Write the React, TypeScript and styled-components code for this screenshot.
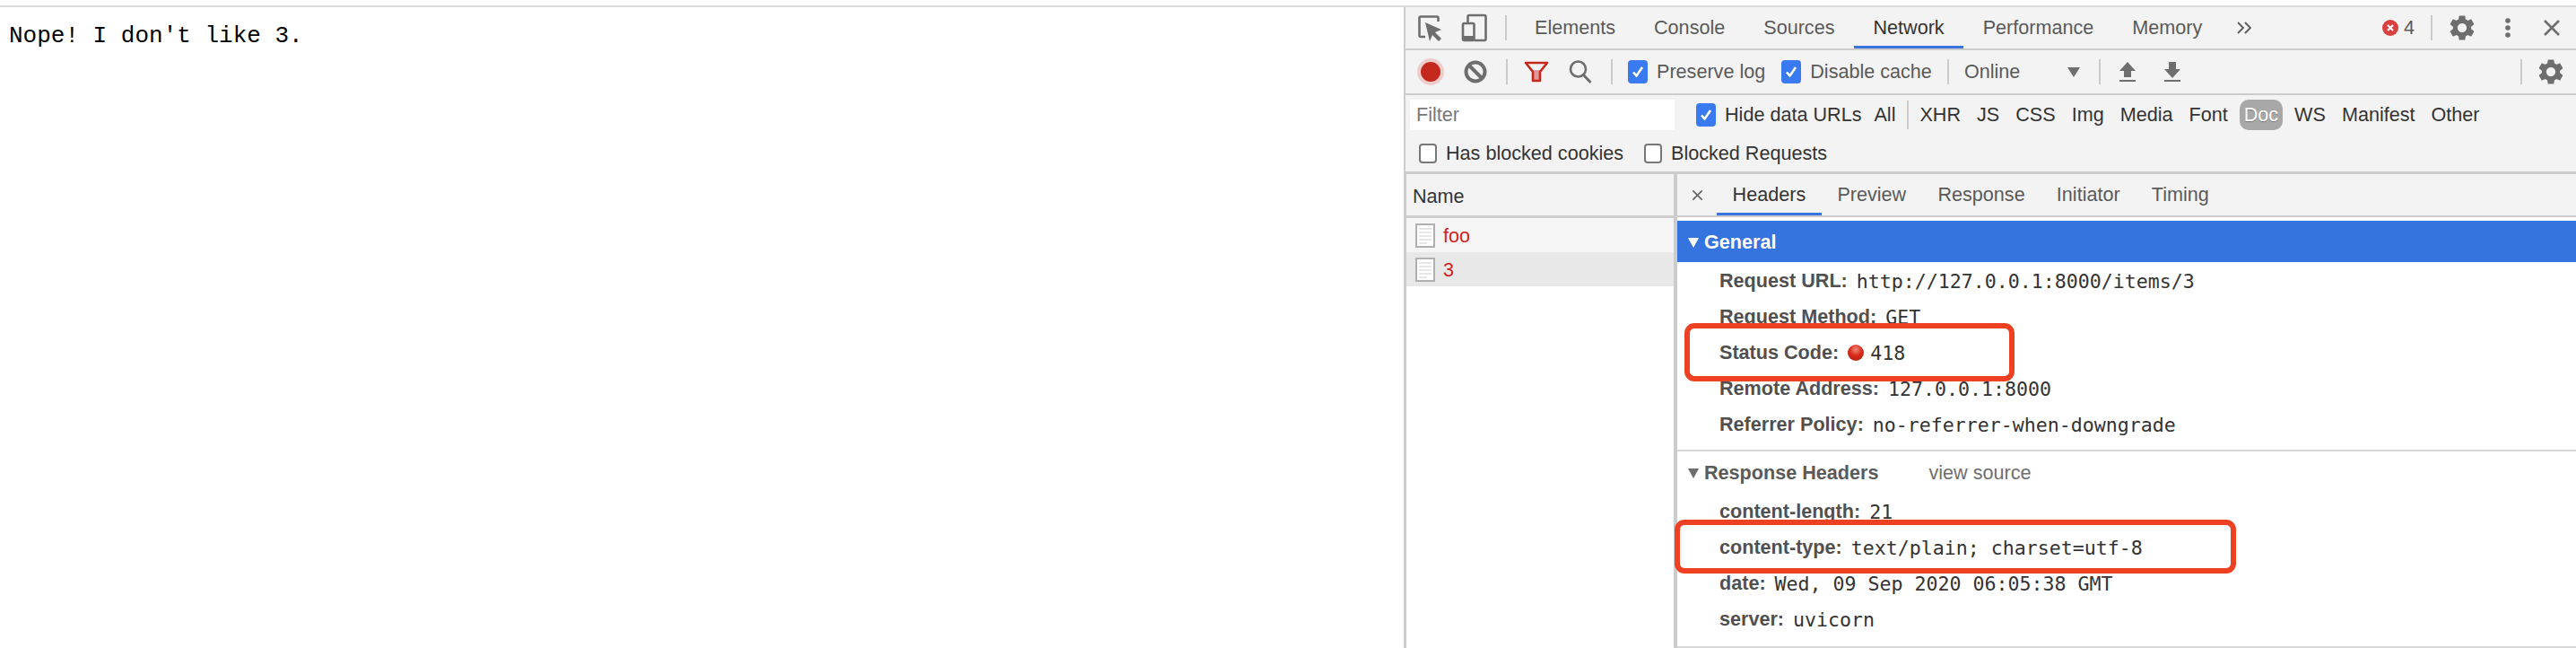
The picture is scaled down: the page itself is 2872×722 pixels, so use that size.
import React from "react";
import styled, { createGlobalStyle } from "styled-components";
import { MdSettings } from "react-icons/md";

const GlobalStyle = createGlobalStyle`
  html, body {
    margin: 0;
    padding: 0;
    background: #fff;
  }
  * {
    box-sizing: border-box;
  }
`;

const Page = styled.div`
  position: relative;
  width: 2872px;
  height: 722px;
  overflow: hidden;
  padding-top: 6px;
  font-family: "Liberation Sans", Arial, sans-serif;
  font-size: 21.6px;
  color: #333;
`;

const Frame = styled.div`
  display: flex;
  height: 716px;
  border-top: 2px solid #dcdce0;
`;

const Browser = styled.pre`
  width: 1565px;
  flex-shrink: 0;
  margin: 0;
  padding: 17px 10px;
  font-family: "Liberation Mono", "Courier New", monospace;
  font-size: 26px;
  line-height: 30px;
  color: #000;
`;

const DevTools = styled.div`
  flex: 1;
  display: flex;
  flex-direction: column;
  min-width: 0;
  border-left: 2px solid #ccc;
`;

const Toolbar = styled.div<{ $height: number }>`
  display: flex;
  align-items: center;
  height: ${(p) => p.$height}px;
  flex-shrink: 0;
  padding-left: 3px;
  background: #f3f3f3;
  border-bottom: 2px solid #ccc;
`;

const FilterArea = styled.div`
  height: 88px;
  flex-shrink: 0;
  background: #f3f3f3;
  border-bottom: 3px solid #ccc;
`;

const FilterRow = styled.div`
  display: flex;
  align-items: center;
  height: 43px;
  padding-left: 5px;
`;

const BlockedRow = styled.div`
  display: flex;
  align-items: center;
  height: 42px;
  padding-top: 2px;
  padding-left: 15px;
`;

const IconButton = styled.div<{ $w?: number; $ml?: number; $color?: string }>`
  display: flex;
  align-items: center;
  justify-content: center;
  flex-shrink: 0;
  width: ${(p) => p.$w ?? 50}px;
  margin-left: ${(p) => p.$ml ?? 0}px;
  color: ${(p) => p.$color ?? "#6e6e6e"};
`;

const Separator = styled.div<{ $ml?: number; $mr?: number; $h?: number }>`
  width: 2px;
  height: ${(p) => p.$h ?? 28}px;
  flex-shrink: 0;
  margin-left: ${(p) => p.$ml ?? 0}px;
  margin-right: ${(p) => p.$mr ?? 0}px;
  background: #ccc;
`;

const Tab = styled.div<{ $active?: boolean }>`
  display: flex;
  align-items: center;
  height: 100%;
  padding: 0 21.5px;
  color: ${(p) => (p.$active ? "#333" : "#5a5a5a")};
  box-shadow: ${(p) => (p.$active ? "inset 0 -3px 0 #3a74df" : "none")};
`;

const TabStrip = styled.div`
  display: flex;
  align-items: center;
  height: 100%;
  margin-left: 9.5px;
`;

const RightGroup = styled.div<{ $pr?: number }>`
  display: flex;
  align-items: center;
  margin-left: auto;
  padding-right: ${(p) => p.$pr ?? 0}px;
`;

const ErrorCount = styled.span`
  margin-left: 6px;
  margin-right: 18px;
  color: #5a5a5a;
`;

const Check = styled.span<{ $checked?: boolean; $ml?: number }>`
  display: inline-flex;
  align-items: center;
  justify-content: center;
  width: ${(p) => (p.$checked ? 22 : 20)}px;
  height: ${(p) => (p.$checked ? 26 : 22)}px;
  flex-shrink: 0;
  margin-left: ${(p) => p.$ml ?? 0}px;
  border-radius: 4px;
  background: ${(p) => (p.$checked ? "#3a7af0" : "#fff")};
  border: ${(p) => (p.$checked ? "none" : "2px solid #777")};
`;

const CheckLabel = styled.span<{ $color?: string }>`
  margin-left: 10px;
  white-space: nowrap;
  color: ${(p) => p.$color ?? "#333"};
`;

const PlainText = styled.span<{ $ml?: number; $color?: string }>`
  margin-left: ${(p) => p.$ml ?? 0}px;
  color: ${(p) => p.$color ?? "#5a5a5a"};
`;

const FilterInput = styled.div`
  display: flex;
  align-items: center;
  width: 295px;
  height: 34px;
  padding-left: 7px;
  background: #fff;
  color: #777;
`;

const TypeItem = styled.span<{ $selected?: boolean }>`
  display: flex;
  align-items: center;
  height: 34px;
  margin: 0 4px;
  padding: 0 5px;
  border-radius: 10px;
  color: ${(p) => (p.$selected ? "#fff" : "#333")};
  background: ${(p) => (p.$selected ? "#a8a8a8" : "transparent")};
  text-shadow: ${(p) => (p.$selected ? "0 1px 1px rgba(0,0,0,.25)" : "none")};
`;

const Split = styled.div`
  flex: 1;
  display: flex;
  min-height: 0;
`;

const NameColumn = styled.div`
  width: 303px;
  flex-shrink: 0;
  border-right: 4px solid #ccc;
  border-left: 1px solid #ccc;
  background: #fff;
`;

const NameHeader = styled.div`
  display: flex;
  align-items: center;
  height: 49px;
  padding-top: 4px;
  padding-left: 7px;
  background: #f3f3f3;
  border-bottom: 3px solid #ccc;
  color: #333;
`;

const NameRow = styled.div<{ $selected?: boolean }>`
  display: flex;
  align-items: center;
  height: 38px;
  padding-left: 10px;
  gap: 9px;
  color: #d0241a;
  background: ${(p) => (p.$selected ? "#e8e8e8" : "#f5f5f5")};
`;

const NameLabel = styled.span`
  padding-top: 2px;
`;

const DetailPane = styled.div`
  flex: 1;
  min-width: 0;
  background: #fff;
`;

const DetailTabs = styled.div`
  display: flex;
  align-items: center;
  height: 48px;
  background: #f3f3f3;
  border-bottom: 2px solid #ccc;
`;

const CloseCross = styled.div`
  display: flex;
  justify-content: center;
  width: 44px;
  color: #666;
`;

const DetailTab = styled.div<{ $active?: boolean }>`
  display: flex;
  align-items: center;
  height: 100%;
  padding: 0 17.6px;
  color: ${(p) => (p.$active ? "#333" : "#5a5a5a")};
  box-shadow: ${(p) => (p.$active ? "inset 0 -3px 0 #3a74df" : "none")};
`;

const SectionBar = styled.div`
  display: flex;
  align-items: center;
  height: 46px;
  margin-top: 4px;
  padding-top: 2px;
  padding-left: 12px;
  gap: 6px;
  background: #3573df;
  color: #fff;
  font-weight: 700;
`;

const Triangle = styled.span<{ $color: string }>`
  width: 0;
  height: 0;
  border-left: 6px solid transparent;
  border-right: 6px solid transparent;
  border-top: 11px solid ${(p) => p.$color};
`;

const Section = styled.div<{ $pb?: number }>`
  padding: 1px 0 ${(p) => p.$pb ?? 8}px;
  border-bottom: 2px solid #d8d8d8;
`;

const SectionTitle = styled.div`
  display: flex;
  align-items: center;
  height: 46px;
  padding-left: 12px;
  gap: 6px;
  font-weight: 700;
  color: #5a5a5a;
`;

const ViewSource = styled.span`
  margin-left: 50px;
  font-weight: 400;
  color: #6e6e6e;
`;

const HeaderRow = styled.div`
  display: flex;
  align-items: center;
  height: 40px;
  padding-left: 47px;
  white-space: nowrap;
`;

const HeaderName = styled.span`
  font-weight: 700;
  color: #505050;
  margin-right: 10px;
`;

const HeaderValue = styled.span`
  font-family: "DejaVu Sans Mono", Menlo, monospace;
  font-size: 21.6px;
  color: #333;
`;

const StatusDot = styled.span`
  width: 18px;
  height: 18px;
  margin-right: 7px;
  border-radius: 50%;
  background: radial-gradient(circle at 50% 30%, #f08a7a 0, #d92a1a 45%, #a81c10 100%);
`;

const Highlight = styled.div`
  position: absolute;
  border: 6px solid #ee4023;
  border-radius: 11px;
`;

const StatusHighlight = styled(Highlight)`
  left: 1878px;
  top: 360px;
  width: 368px;
  height: 65px;
`;

const ContentTypeHighlight = styled(Highlight)`
  left: 1867px;
  top: 579px;
  width: 626px;
  height: 60px;
`;

const InspectIcon = () => (
  <svg width="32" height="36" viewBox="0 0 32 36" fill="none">
    <path d="M10 28H5a1.5 1.5 0 0 1-1.5-1.5V7A1.5 1.5 0 0 1 5 5.5h18A1.5 1.5 0 0 1 24.5 7v4" stroke="#6e6e6e" strokeWidth="2.6" />
    <path d="M10 12l18 8-7 3 7 7-3 3-7-7-3 7z" fill="#6e6e6e" />
  </svg>
);

const DeviceIcon = () => (
  <svg width="30" height="36" viewBox="0 0 30 36" fill="none">
    <path d="M7.5 12V5.5A1.5 1.5 0 0 1 9 4h17a1.5 1.5 0 0 1 1.5 1.5v25A1.5 1.5 0 0 1 26 32H15" stroke="#6e6e6e" strokeWidth="2.6" />
    <rect x="2" y="13" width="12.5" height="19" rx="1.5" stroke="#6e6e6e" strokeWidth="2.6" />
    <rect x="2" y="27" width="12.5" height="5" fill="#6e6e6e" />
  </svg>
);

const RecordIcon = () => (
  <svg width="32" height="32" viewBox="0 0 32 32">
    <circle cx="16" cy="16" r="15" fill="#c5281c" opacity=".18" />
    <circle cx="16" cy="16" r="11" fill="#c5281c" />
  </svg>
);

const ClearIcon = () => (
  <svg width="26" height="26" viewBox="0 0 26 26" fill="none" stroke="#6e6e6e" strokeWidth="4">
    <circle cx="13" cy="13" r="10.5" />
    <path d="M5.5 5.5l15 15" />
  </svg>
);

const FunnelIcon = () => (
  <svg width="28" height="24" viewBox="0 0 28 24">
    <path d="M8 10h12l-2 3v8h-8v-8z" fill="#e0989a" />
    <path d="M2 2h24l-8 10v10h-8V12z" fill="none" stroke="#c5281c" strokeWidth="2.6" strokeLinejoin="round" />
  </svg>
);

const SearchIcon = () => (
  <svg width="26" height="28" viewBox="0 0 26 28" fill="none" stroke="#6e6e6e">
    <circle cx="10.5" cy="11" r="8.5" strokeWidth="2.6" />
    <path d="M16.5 17.5l8 8.5" strokeWidth="3" />
  </svg>
);

const ErrorIcon = () => (
  <svg width="18" height="18" viewBox="0 0 18 18">
    <circle cx="9" cy="9" r="9" fill="#d94040" />
    <path d="M6 6l6 6M12 6l-6 6" stroke="#fff" strokeWidth="2.2" />
  </svg>
);

const DotsIcon = () => (
  <svg width="8" height="24" viewBox="0 0 8 24" fill="#6e6e6e">
    <circle cx="4" cy="4" r="2.8" />
    <circle cx="4" cy="12" r="2.8" />
    <circle cx="4" cy="20" r="2.8" />
  </svg>
);

const CrossIcon = ({ size, weight }: { size: number; weight: number }) => (
  <svg width={size} height={size} viewBox="0 0 20 20" fill="none" stroke="currentColor" strokeWidth={weight}>
    <path d="M2 2l16 16M18 2L2 18" />
  </svg>
);

const ChevronsIcon = () => (
  <svg width="16" height="14" viewBox="0 0 16 14" fill="none" stroke="#5a5a5a" strokeWidth="1.8">
    <path d="M1 1l6 6-6 6M9 1l6 6-6 6" />
  </svg>
);

const TickIcon = () => (
  <svg width="14" height="14" viewBox="0 0 14 14" fill="none" stroke="#fff" strokeWidth="2.6">
    <path d="M2 7.5l3.5 4L12 2" />
  </svg>
);

const CaretIcon = () => (
  <svg width="14" height="11" viewBox="0 0 14 11" fill="#6e6e6e">
    <path d="M0 0h14L7 11z" />
  </svg>
);

const UploadIcon = () => (
  <svg width="20" height="24" viewBox="0 0 20 24" fill="#6e6e6e">
    <path d="M10 1l9 10h-5v7H6v-7H1z" />
    <rect x="1" y="21" width="18" height="2" />
  </svg>
);

const DownloadIcon = () => (
  <svg width="20" height="24" viewBox="0 0 20 24" fill="#6e6e6e">
    <path d="M6 1h8v8h5l-9 10L1 9h5z" />
    <rect x="1" y="21" width="18" height="2" />
  </svg>
);

const FileIcon = () => (
  <svg width="22" height="27" viewBox="0 0 22 27">
    <rect x="1" y="1" width="20" height="25" fill="#fff" stroke="#b0b0b0" strokeWidth="2" />
    <path d="M4 6h14M4 10h14M4 14h14M4 18h14M4 22h9" stroke="#e0e0e0" strokeWidth="1.6" />
  </svg>
);

const mainTabs = ["Elements", "Console", "Sources", "Network", "Performance", "Memory"];
const typeFilters = ["XHR", "JS", "CSS", "Img", "Media", "Font", "Doc", "WS", "Manifest", "Other"];
const detailTabs = ["Headers", "Preview", "Response", "Initiator", "Timing"];

export default function App() {
  return (
    <Page>
      <GlobalStyle />
      <Frame>
        <Browser>Nope! I don't like 3.</Browser>
        <DevTools>
          <Toolbar $height={48}>
            <IconButton $w={50}><InspectIcon /></IconButton>
            <IconButton $w={48}><DeviceIcon /></IconButton>
            <Separator $ml={10} />
            <TabStrip>
              {mainTabs.map((t) => (
                <Tab key={t} $active={t === "Network"}>{t}</Tab>
              ))}
            </TabStrip>
            <IconButton $w={16} $ml={17}><ChevronsIcon /></IconButton>
            <RightGroup $pr={3}>
              <ErrorIcon />
              <ErrorCount>4</ErrorCount>
              <Separator $mr={8} />
              <IconButton><MdSettings size={34} /></IconButton>
              <IconButton $w={51}><DotsIcon /></IconButton>
              <IconButton $w={48}><CrossIcon size={20} weight={2.6} /></IconButton>
            </RightGroup>
          </Toolbar>

          <Toolbar $height={50}>
            <IconButton><RecordIcon /></IconButton>
            <IconButton><ClearIcon /></IconButton>
            <Separator $ml={9} />
            <IconButton $ml={7}><FunnelIcon /></IconButton>
            <IconButton $ml={-1}><SearchIcon /></IconButton>
            <Separator $ml={9} />
            <Check $checked $ml={17}><TickIcon /></Check>
            <CheckLabel $color="#5a5a5a">Preserve log</CheckLabel>
            <Check $checked $ml={18}><TickIcon /></Check>
            <CheckLabel $color="#5a5a5a">Disable cache</CheckLabel>
            <Separator $ml={17} />
            <PlainText $ml={17}>Online</PlainText>
            <IconButton $w={16} $ml={52}><CaretIcon /></IconButton>
            <Separator $ml={20} />
            <IconButton $ml={5}><UploadIcon /></IconButton>
            <IconButton><DownloadIcon /></IconButton>
            <RightGroup>
              <Separator $mr={6} />
              <IconButton $w={52}><MdSettings size={34} /></IconButton>
              <IconButton $w={2} />
            </RightGroup>
          </Toolbar>

          <FilterArea>
            <FilterRow>
              <FilterInput>Filter</FilterInput>
              <Check $checked $ml={24}><TickIcon /></Check>
              <CheckLabel>Hide data URLs</CheckLabel>
              <PlainText $ml={14} $color="#333">All</PlainText>
              <Separator $ml={13} $mr={3} $h={32} />
              {typeFilters.map((t) => (
                <TypeItem key={t} $selected={t === "Doc"}>{t}</TypeItem>
              ))}
            </FilterRow>
            <BlockedRow>
              <Check />
              <CheckLabel>Has blocked cookies</CheckLabel>
              <Check $ml={23} />
              <CheckLabel>Blocked Requests</CheckLabel>
            </BlockedRow>
          </FilterArea>

          <Split>
            <NameColumn>
              <NameHeader>Name</NameHeader>
              <NameRow><FileIcon /><NameLabel>foo</NameLabel></NameRow>
              <NameRow $selected><FileIcon /><NameLabel>3</NameLabel></NameRow>
            </NameColumn>
            <DetailPane>
              <DetailTabs>
                <CloseCross><CrossIcon size={13} weight={2.6} /></CloseCross>
                {detailTabs.map((t) => (
                  <DetailTab key={t} $active={t === "Headers"}>{t}</DetailTab>
                ))}
              </DetailTabs>
              <SectionBar><Triangle $color="#fff" />General</SectionBar>
              <Section>
                <HeaderRow><HeaderName>Request URL:</HeaderName><HeaderValue>http://127.0.0.1:8000/items/3</HeaderValue></HeaderRow>
                <HeaderRow><HeaderName>Request Method:</HeaderName><HeaderValue>GET</HeaderValue></HeaderRow>
                <HeaderRow><HeaderName>Status Code:</HeaderName><StatusDot /><HeaderValue>418</HeaderValue></HeaderRow>
                <HeaderRow><HeaderName>Remote Address:</HeaderName><HeaderValue>127.0.0.1:8000</HeaderValue></HeaderRow>
                <HeaderRow><HeaderName>Referrer Policy:</HeaderName><HeaderValue>no-referrer-when-downgrade</HeaderValue></HeaderRow>
              </Section>
              <Section $pb={10}>
                <SectionTitle>
                  <Triangle $color="#6e6e6e" />Response Headers
                  <ViewSource>view source</ViewSource>
                </SectionTitle>
                <HeaderRow><HeaderName>content-length:</HeaderName><HeaderValue>21</HeaderValue></HeaderRow>
                <HeaderRow><HeaderName>content-type:</HeaderName><HeaderValue>text/plain; charset=utf-8</HeaderValue></HeaderRow>
                <HeaderRow><HeaderName>date:</HeaderName><HeaderValue>Wed, 09 Sep 2020 06:05:38 GMT</HeaderValue></HeaderRow>
                <HeaderRow><HeaderName>server:</HeaderName><HeaderValue>uvicorn</HeaderValue></HeaderRow>
              </Section>
            </DetailPane>
          </Split>
        </DevTools>
      </Frame>
      <StatusHighlight />
      <ContentTypeHighlight />
    </Page>
  );
}
